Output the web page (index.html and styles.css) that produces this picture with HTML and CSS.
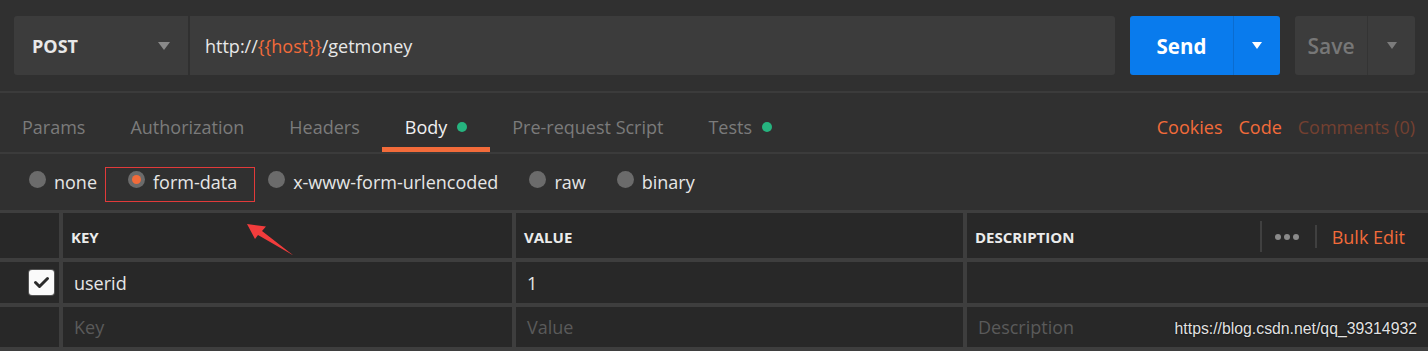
FILE: index.html
```html
<!DOCTYPE html>
<html lang="en">
<head>
  <meta charset="UTF-8">
  <title>POST getmoney</title>
  <link rel="stylesheet" href="styles.css">
</head>
<body>
  <!-- request line -->
  <div class="request-bar">
    <div class="url-group">
      <div class="method">POST <span class="caret"></span></div>
      <div class="url">http://<span class="var">{{host}}</span>/getmoney</div>
    </div>
    <div class="split-btn send">
      <span class="btn-label">Send</span>
      <span class="btn-drop"><span class="caret"></span></span>
    </div>
    <div class="split-btn save">
      <span class="btn-label">Save</span>
      <span class="btn-drop"><span class="caret"></span></span>
    </div>
  </div>

  <!-- tabs -->
  <div class="tabs">
    <div class="tab">Params</div>
    <div class="tab">Authorization</div>
    <div class="tab">Headers</div>
    <div class="tab active">Body <span class="dot"></span></div>
    <div class="tab">Pre-request Script</div>
    <div class="tab">Tests <span class="dot"></span></div>
    <div class="tab-links">
      <span class="link">Cookies</span>
      <span class="link">Code</span>
      <span class="link dim">Comments (0)</span>
    </div>
  </div>

  <!-- body types -->
  <div class="body-types">
    <label class="radio"><span class="circle"></span>none</label>
    <label class="radio checked"><span class="circle"></span>form-data</label>
    <label class="radio"><span class="circle"></span>x-www-form-urlencoded</label>
    <label class="radio"><span class="circle"></span>raw</label>
    <label class="radio"><span class="circle"></span>binary</label>
    <div class="mark-box"></div>
  </div>

  <!-- key/value table -->
  <div class="kv-table">
    <div class="cell"></div>
    <div class="cell head">KEY</div>
    <div class="cell head">VALUE</div>
    <div class="cell head">
      DESCRIPTION
      <div class="head-actions">
        <span class="sep"></span>
        <span class="dots"><i></i><i></i><i></i></span>
        <span class="sep short"></span>
        <span class="link">Bulk Edit</span>
      </div>
    </div>

    <div class="cell check-cell">
      <span class="checkbox">
        <svg width="25" height="25" viewBox="0 0 25 25"><path d="M6.5 12.5 L10.5 16.5 L18.5 8.5" fill="none" stroke="#2b2b2b" stroke-width="3" stroke-linecap="round" stroke-linejoin="round"/></svg>
      </span>
    </div>
    <div class="cell text">userid</div>
    <div class="cell text">1</div>
    <div class="cell text"></div>

    <div class="cell"></div>
    <div class="cell text placeholder">Key</div>
    <div class="cell text placeholder">Value</div>
    <div class="cell text placeholder">Description</div>
  </div>

  <svg class="arrow" width="60" height="40" viewBox="245 222 60 40">
    <polygon points="247,224 266,226.5 262,231 293.5,255.5 258,235 255,239" fill="#f23c3c"/>
  </svg>

  <div class="watermark">https://blog.csdn.net/qq_39314932</div>
</body>
</html>
```

FILE: styles.css
```css
body {
  margin: 0;
  background: #303030;
  font-family: "Open Sans", "Noto Sans", sans-serif;
  font-size: 18px;
  color: #e6e6e6;
  position: relative;
  height: 351px;
  overflow: hidden;
}

.caret {
  display: inline-block;
  width: 0;
  height: 0;
  border-left: 6px solid transparent;
  border-right: 6px solid transparent;
  border-top: 8px solid #8a8a8a;
}

/* request line */
.request-bar {
  display: flex;
  gap: 15px;
  padding: 16px 13px 16px 14px;
  border-bottom: 2px solid #3b3b3b;
}
.url-group {
  flex: 1;
  display: flex;
  height: 59px;
}
.method {
  width: 174px;
  box-sizing: border-box;
  display: flex;
  align-items: center;
  justify-content: space-between;
  padding: 0 18px 0 18px;
  background: #3c3c3c;
  border-radius: 3px 0 0 3px;
  margin-right: 2px;
  font-weight: 700;
  font-size: 18px;
  color: #e8e8e8;
}
.url {
  flex: 1;
  display: flex;
  align-items: center;
  padding-left: 15px;
  background: #3c3c3c;
  border-radius: 0 3px 3px 0;
  color: #e8e8e8;
}
.url .var {
  color: #f26b3a;
}
.split-btn {
  display: flex;
  height: 59px;
  border-radius: 3px;
}
.btn-label {
  display: flex;
  align-items: center;
  justify-content: center;
  font-weight: 700;
  font-size: 20.5px;
}
.btn-drop {
  display: flex;
  align-items: center;
  justify-content: center;
}
.send {
  width: 150px;
  background: #097bed;
  color: #fff;
}
.send .btn-label {
  width: 103px;
  border-right: 1px solid #0a6cd0;
}
.send .btn-drop {
  flex: 1;
}
.send .caret {
  border-top-color: #fff;
  border-left-width: 5.5px;
  border-right-width: 5.5px;
  border-top-width: 7px;
}
.save {
  width: 120px;
  background: #3c3c3c;
  color: #777;
}
.save .btn-label {
  width: 72px;
  border-right: 1px solid #343434;
  font-weight: 600;
  font-size: 21px;
}
.save .btn-drop {
  flex: 1;
}
.save .caret {
  border-top-color: #7c7c7c;
  border-left-width: 5.5px;
  border-right-width: 5.5px;
  border-top-width: 7px;
}

/* tabs */
.tabs {
  display: flex;
  align-items: flex-end;
  height: 59px;
  border-bottom: 2px solid #3b3b3b;
}
.tab {
  display: flex;
  align-items: center;
  gap: 10px;
  padding: 0 22.5px 8px;
  border-bottom: 5px solid transparent;
  line-height: 24px;
  color: #7b7b7b;
}
.tab:first-child {
  padding-left: 22px;
}
.tab.active {
  color: #f0f0f0;
  border-bottom-color: #f26b3a;
}
.dot {
  width: 10px;
  height: 10px;
  border-radius: 50%;
  background: #26b47f;
}
.tab-links {
  margin-left: auto;
  display: flex;
  gap: 16px;
  padding: 0 13px 13px 0;
  line-height: 24px;
}
.link {
  color: #f26b3a;
}
.link.dim {
  color: #744030;
}

/* body types */
.body-types {
  position: relative;
  display: flex;
  align-items: center;
  gap: 31px;
  height: 56px;
  padding-left: 29px;
}
.radio {
  display: flex;
  align-items: center;
  gap: 8px;
  color: #e6e6e6;
}
.circle {
  width: 17px;
  height: 17px;
  border-radius: 50%;
  background: #6b6b6b;
  margin-top: -6px;
  display: flex;
  align-items: center;
  justify-content: center;
}
.radio.checked .circle::after {
  content: "";
  width: 9px;
  height: 9px;
  border-radius: 50%;
  background: #f26b3a;
}
.mark-box {
  position: absolute;
  left: 105px;
  top: 13px;
  width: 148px;
  height: 33px;
  border: 1px solid #e23a3a;
}

/* key/value table */
.kv-table {
  display: grid;
  grid-template-columns: 59px 449px 447px 1fr;
  grid-template-rows: 45px 41px 40px;
  gap: 4px;
  padding: 3px 0 4px;
  background: #3e3e3e;
}
.cell {
  background: #282828;
  display: flex;
  align-items: center;
}
.head {
  padding-left: 8px;
  font-size: 15px;
  font-weight: 700;
  color: #ececec;
  padding-top: 2px;
}
.head-actions {
  margin-left: auto;
  display: flex;
  align-items: center;
  padding-right: 23px;
  font-weight: 400;
  font-size: 18px;
}
.sep {
  width: 2px;
  height: 31px;
  background: #404040;
  margin-right: 13px;
}
.sep.short {
  height: 23px;
  margin: 0 15px 0 16px;
}
.dots {
  display: flex;
  gap: 3px;
}
.dots i {
  width: 6px;
  height: 6px;
  border-radius: 50%;
  background: #8a8a8a;
}
.text {
  padding-left: 11px;
  color: #e6e6e6;
}
.placeholder {
  color: #5a5a5a;
}
.check-cell {
  justify-content: flex-end;
  padding-right: 5px;
}
.checkbox {
  width: 25px;
  height: 25px;
  border-radius: 3px;
  background: #fafafa;
  box-shadow: 0 0 0 1px #555;
  display: flex;
}

/* annotations */
.arrow {
  position: absolute;
  left: 245px;
  top: 222px;
}
.watermark {
  position: absolute;
  right: 11px;
  top: 320px;
  font-family: "Liberation Sans", Arial, sans-serif;
  font-size: 15.8px;
  color: #e2e2e2;
  text-shadow: 0 0 2px #000;
}
```
